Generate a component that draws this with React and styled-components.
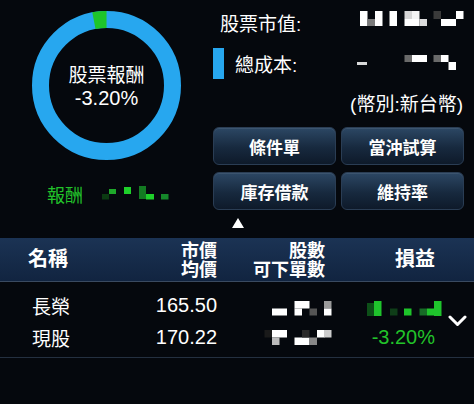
import React from 'react'
import styled, { createGlobalStyle } from 'styled-components'

const GlobalStyle = createGlobalStyle`
  body {
    margin: 0;
    background: #05080d;
    font-family: "Liberation Sans", "Noto Sans CJK TC", sans-serif;
    color: #fff;
  }
`

const Page = styled.div`
  width: 474px;
  height: 404px;
  background: #05080d;
  overflow: hidden;
`

const Top = styled.div`
  display: flex;
  height: 238px;
`

const LeftCol = styled.div`
  width: 213px;
  display: flex;
  flex-direction: column;
`

const DonutWrap = styled.div`
  position: relative;
  width: 149px;
  height: 149px;
  margin: 11px 0 0 32px;
`

const DonutLabel = styled.div`
  position: absolute;
  inset: 0;
  display: flex;
  flex-direction: column;
  align-items: center;
  justify-content: center;
  padding-top: 3px;
  font-size: 19px;
  line-height: 23px;
  .pct {
    font-size: 20px;
  }
`

const ReturnRow = styled.div`
  display: flex;
  align-items: center;
  height: 20px;
  margin: 24px 0 0 47px;
  color: #22c32a;
  font-size: 18px;
`

const RightCol = styled.div`
  width: 251px;
  display: flex;
  flex-direction: column;
`

const InfoRow = styled.div`
  display: flex;
  align-items: center;
  justify-content: space-between;
  height: ${p => p.$h}px;
  margin-top: ${p => p.$mt}px;
`

const Label = styled.span`
  font-size: 19px;
  margin-left: ${p => p.$ml || 0}px;
  margin-right: auto;
`

const BlueBar = styled.span`
  width: 11px;
  height: 31px;
  background: #27a7ef;
`

const Currency = styled.div`
  margin-top: 14px;
  height: 24px;
  line-height: 24px;
  text-align: right;
  font-size: 19px;
  padding-right: 1px;
`

const ButtonGrid = styled.div`
  display: grid;
  grid-template-columns: 123px 123px;
  grid-auto-rows: 38px;
  column-gap: 5px;
  row-gap: 7px;
  margin-top: 10px;
`

const ActionButton = styled.button`
  border: 1px solid #2a3d54;
  border-radius: 6px;
  background: linear-gradient(#2c4764, #17293e 55%, #0e1a2a);
  color: #fff;
  font-family: inherit;
  font-size: 17px;
  font-weight: 700;
  padding: 0;
  box-shadow: inset 0 1px 0 rgba(255, 255, 255, 0.08);
`

const Caret = styled.span`
  width: 0;
  height: 0;
  margin: 8px 0 0 19px;
  border-left: 6px solid transparent;
  border-right: 6px solid transparent;
  border-bottom: 10px solid #fff;
`

const cols = '150px 67px 108px 110px 39px'

const Header = styled.div`
  display: grid;
  grid-template-columns: ${cols};
  height: 43px;
  align-items: center;
  background: linear-gradient(#1b3354, #112440);
  border-bottom: 1px solid #3a4a60;
`

const HeadCell = styled.div`
  font-weight: 700;
  font-size: ${p => (p.$two ? 18 : 20)}px;
  line-height: 19px;
  text-align: ${p => p.$align || 'right'};
  padding-left: ${p => p.$pl || 0}px;
  padding-top: ${p => (p.$two ? 2 : 0)}px;
`

const DataGrid = styled.div`
  display: grid;
  grid-template-columns: ${cols};
  grid-template-rows: 32px 32px;
  padding: 7px 0 4px;
  border-bottom: 1px solid #243040;
  align-items: center;
`

const Cell = styled.div`
  font-size: ${p => (p.$num ? 20 : 19)}px;
  text-align: ${p => p.$align || 'right'};
  padding-left: ${p => p.$pl || 0}px;
  color: ${p => p.$color || '#fff'};
`

const MosaicSvg = styled.svg`
  display: block;
  justify-self: start;
  align-self: start;
  margin: ${p => p.$mt || 0}px 0 0 ${p => p.$ml || 0}px;
  flex-shrink: 0;
`

const Chevron = styled.svg`
  grid-column: 5;
  grid-row: 1 / span 2;
  justify-self: start;
  margin-left: 13px;
`

const Mosaic = ({ box, cells, mt, ml }) => (
  <MosaicSvg
    width={box[2]}
    height={box[3]}
    viewBox={box.join(' ')}
    $mt={mt}
    $ml={ml}
  >
    {cells.map(([x, y, w, h, c], i) => (
      <rect key={i} x={x} y={y} width={w} height={h} fill={c} />
    ))}
  </MosaicSvg>
)

const marketCells = [
  [360, 14, 7.5, 15, '#fff'],
  [367.5, 22, 7.5, 7, '#7a7a7a'],
  [375, 14, 7.5, 15, '#fff'],
  [389.5, 14, 7.5, 15, '#fff'],
  [404.5, 14, 7.5, 8, '#d6d6d6'],
  [412, 14, 7.5, 8, '#f4f4f4'],
  [404.5, 22, 15, 7, '#fff'],
  [419.5, 22, 7.5, 7, '#dcdcdc'],
  [433.5, 14, 7.5, 8, '#3a3a3a'],
  [441, 22, 15, 7, '#fff'],
  [456, 14, 7.5, 8, '#fff'],
]

const costCells = [
  [357, 65, 10, 3, '#d8d8d8'],
  [404.5, 58, 7.5, 7, '#6a6a6a'],
  [412, 58, 15, 7, '#fff'],
  [433.5, 58, 7.5, 7, '#6a6a6a'],
  [441, 58, 7.5, 7, '#fff'],
  [448.5, 65, 7.5, 8, '#fff'],
]

const returnCells = [
  [75, 190, 6.5, 10, '#0e5a1a'],
  [103, 198, 7, 5.5, '#0b3a12'],
  [110, 193, 7, 5, '#1ea82a'],
  [125, 191, 7, 7, '#1ed02a'],
  [140, 190, 7, 13, '#137a22'],
  [147, 198, 8, 5.5, '#1ed02a'],
  [162, 198, 7.5, 5.5, '#15882a'],
]

const shares1 = [
  [272, 308.5, 15, 7, '#fff'],
  [294.5, 301, 15, 7.5, '#fff'],
  [294.5, 308.5, 7.5, 7, '#fff'],
  [309.5, 308.5, 7.5, 7, '#555'],
  [324, 301, 7.5, 7.5, '#9a9a9a'],
  [324, 308.5, 7.5, 7, '#fff'],
]

const shares2 = [
  [264.5, 330, 7.5, 7.5, '#1a1a1a'],
  [272, 330, 15, 7.5, '#fff'],
  [272, 337.5, 7.5, 7.5, '#bbb'],
  [294.5, 337.5, 15, 7.5, '#fff'],
  [302, 330, 7.5, 7.5, '#2a2a2a'],
  [317, 330, 7.5, 7.5, '#fff'],
  [309.5, 337.5, 7.5, 7.5, '#888'],
  [324, 330, 7.5, 7.5, '#ccc'],
]

const profitCells = [
  [367, 303, 7.5, 13, '#0d4f18'],
  [374, 301, 7.5, 15, '#1fc42c'],
  [390, 308.5, 7.5, 7, '#0f3d18'],
  [404, 308.5, 7.5, 7, '#1ec42a'],
  [419.5, 308.5, 7.5, 7, '#176b26'],
  [427, 308.5, 7.5, 7, '#1fc42c'],
  [434, 301, 7.5, 15, '#1fc42c'],
]

const Donut = () => (
  <svg width='149' height='149' viewBox='0 0 149 149'>
    <circle cx='74.5' cy='74.5' r='66' fill='none' stroke='#27a7ef' strokeWidth='17' />
    <circle
      cx='74.5'
      cy='74.5'
      r='66'
      fill='none'
      stroke='#1ec52a'
      strokeWidth='17'
      strokeDasharray='12.7 500'
      transform='rotate(-101 74.5 74.5)'
    />
  </svg>
)

const App = () => (
  <Page>
    <GlobalStyle />
    <Top>
      <LeftCol>
        <DonutWrap>
          <Donut />
          <DonutLabel>
            <span>股票報酬</span>
            <span className='pct'>-3.20%</span>
          </DonutLabel>
        </DonutWrap>
        <ReturnRow>
          <span>報酬</span>
          <Mosaic box={[84, 188, 90, 18]} cells={returnCells} mt={0} />
        </ReturnRow>
      </LeftCol>
      <RightCol>
        <InfoRow $h={27} $mt={9}>
          <Label $ml={7}>股票市值:</Label>
          <Mosaic box={[357, 12, 107, 19]} cells={marketCells} mt={0} />
        </InfoRow>
        <InfoRow $h={31} $mt={12}>
          <BlueBar />
          <Label $ml={11}>總成本:</Label>
          <Mosaic box={[355, 55, 109, 20]} cells={costCells} mt={4} />
        </InfoRow>
        <Currency>(幣別:新台幣)</Currency>
        <ButtonGrid>
          <ActionButton type='button'>條件單</ActionButton>
          <ActionButton type='button'>當沖試算</ActionButton>
          <ActionButton type='button'>庫存借款</ActionButton>
          <ActionButton type='button'>維持率</ActionButton>
        </ButtonGrid>
        <Caret />
      </RightCol>
    </Top>

    <Header>
      <HeadCell $align='left' $pl={28}>名稱</HeadCell>
      <HeadCell $two>市價<br />均價</HeadCell>
      <HeadCell $two>股數<br />可下單數</HeadCell>
      <HeadCell>損益</HeadCell>
    </Header>

    <DataGrid>
      <Cell $align='left' $pl={32}>長榮</Cell>
      <Cell $num>165.50</Cell>
      <Mosaic box={[264, 299, 70, 19]} cells={shares1} mt={10} ml={47} />
      <Mosaic box={[365, 299, 78, 19]} cells={profitCells} mt={10} ml={40} />
      <Chevron width='19' height='12' viewBox='0 0 19 12'>
        <polyline points='2,2 9.5,9.5 17,2' fill='none' stroke='#fff' strokeWidth='3' strokeLinecap='round' strokeLinejoin='round' />
      </Chevron>
      <Cell $align='left' $pl={32}>現股</Cell>
      <Cell $num>170.22</Cell>
      <Mosaic box={[264, 328, 70, 19]} cells={shares2} mt={7} ml={47} />
      <Cell $num $color='#22c32a'>-3.20%</Cell>
    </DataGrid>
  </Page>
)

export default App
